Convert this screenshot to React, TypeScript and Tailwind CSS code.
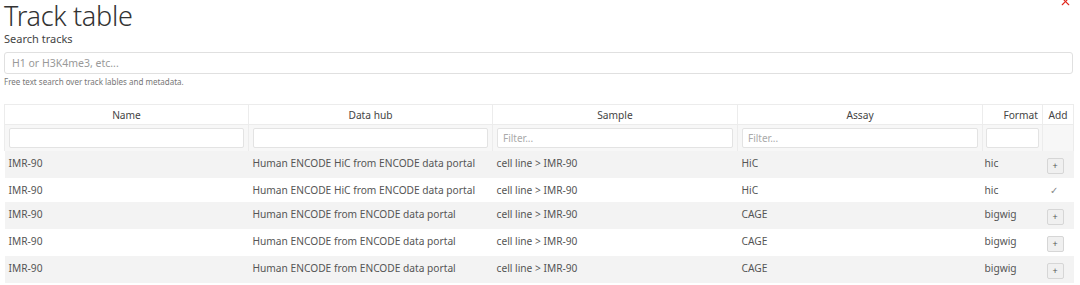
import { X } from "lucide-react";

type Track = {
  name: string;
  hub: string;
  sample: string;
  assay: string;
  format: string;
  added: boolean;
};

const tracks: Track[] = [
  { name: "IMR-90", hub: "Human ENCODE HiC from ENCODE data portal", sample: "cell line > IMR-90", assay: "HiC", format: "hic", added: false },
  { name: "IMR-90", hub: "Human ENCODE HiC from ENCODE data portal", sample: "cell line > IMR-90", assay: "HiC", format: "hic", added: true },
  { name: "IMR-90", hub: "Human ENCODE from ENCODE data portal", sample: "cell line > IMR-90", assay: "CAGE", format: "bigwig", added: false },
  { name: "IMR-90", hub: "Human ENCODE from ENCODE data portal", sample: "cell line > IMR-90", assay: "CAGE", format: "bigwig", added: false },
  { name: "IMR-90", hub: "Human ENCODE from ENCODE data portal", sample: "cell line > IMR-90", assay: "CAGE", format: "bigwig", added: false },
];

const filterInput =
  "block w-full h-[20px] rounded-[2px] border border-[#e3e3e3] bg-white px-[5px] text-[10px] text-[#555] placeholder:text-[#aaa] outline-none";

export default function App() {
  return (
    <div
      className="relative bg-white pl-[4px] pr-[7px] text-[#555]"
      style={{ fontFamily: '"Noto Sans", "Open Sans", sans-serif' }}
    >
      <X className="absolute right-[8px] top-[-5px] h-[13px] w-[13px] text-[#e0261b]" strokeWidth={2} />

      <h1 className="pt-[1px] text-[27px] leading-[30px] font-light text-[#333] tracking-[-0.3px]">Track table</h1>

      <label className="block text-[11px] leading-[16px] text-[#444]">Search tracks</label>
      <input
        className="mt-[5px] block h-[22px] w-full rounded-[3px] border border-[#e0e0e0] px-[7px] text-[10.5px] text-[#555] placeholder:text-[#999] outline-none"
        placeholder="H1 or H3K4me3, etc..."
      />
      <p className="mt-[2px] text-[8px] leading-[12px] text-[#777]">
        Free text search over track lables and metadata.
      </p>

      <table className="mt-[16px] w-full table-fixed border-collapse text-[10.2px]">
        <colgroup>
          <col className="w-[244px]" />
          <col className="w-[244px]" />
          <col className="w-[245px]" />
          <col className="w-[245px]" />
          <col className="w-[60px]" />
          <col className="w-[31px]" />
        </colgroup>
        <thead>
          <tr className="h-[20px] text-[#444]">
            {["Name", "Data hub", "Sample", "Assay"].map((h) => (
              <th key={h} className="border border-[#ececec] px-[4px] text-center font-normal leading-[14px]">
                {h}
              </th>
            ))}
            <th className="border border-[#ececec] px-[4px] text-right font-normal leading-[14px]">Format</th>
            <th className="border border-[#ececec] px-[4px] text-center font-normal leading-[14px]">Add</th>
          </tr>
          <tr className="h-[26px] bg-[#f7f7f7]">
            <td className="border-x border-[#ececec] px-[4px] py-[2px]">
              <input className={filterInput} />
            </td>
            <td className="border-x border-[#ececec] px-[4px] py-[2px]">
              <input className={filterInput} />
            </td>
            <td className="border-x border-[#ececec] px-[4px] py-[2px]">
              <input className={filterInput} placeholder="Filter..." />
            </td>
            <td className="border-x border-[#ececec] px-[4px] py-[2px]">
              <input className={filterInput} placeholder="Filter..." />
            </td>
            <td className="border-x border-[#ececec] px-[3px] py-[2px]">
              <input className={filterInput} />
            </td>
            <td className="border-x border-[#ececec]" />
          </tr>
        </thead>
        <tbody>
          {tracks.map((t, i) => (
            <tr key={i} className={i % 2 === 0 ? "bg-[#f3f3f3]" : "bg-white"}>
              <td className="px-[4px] py-[5px] align-top leading-[14px]">{t.name}</td>
              <td className="px-[4px] py-[5px] align-top leading-[14px]">{t.hub}</td>
              <td className="px-[4px] py-[5px] align-top leading-[14px]">{t.sample}</td>
              <td className="px-[4px] py-[5px] align-top leading-[14px]">{t.assay}</td>
              <td className="px-[2px] py-[5px] align-top leading-[14px]">{t.format}</td>
              <td className="px-[4px] pt-[5px] pb-[4px] align-top leading-[14px]">
                {t.added ? (
                  <span className="block h-[14px] pl-[3px] text-[10px] leading-[14px] text-[#888]">✓</span>
                ) : (
                  <button className="mt-[2px] block h-[16px] w-[17px] rounded-[2px] border border-[#d6d6d6] bg-[#f0f0f0] text-[9px] leading-[12px] text-[#555]">
                    +
                  </button>
                )}
              </td>
            </tr>
          ))}
        </tbody>
      </table>
    </div>
  );
}
